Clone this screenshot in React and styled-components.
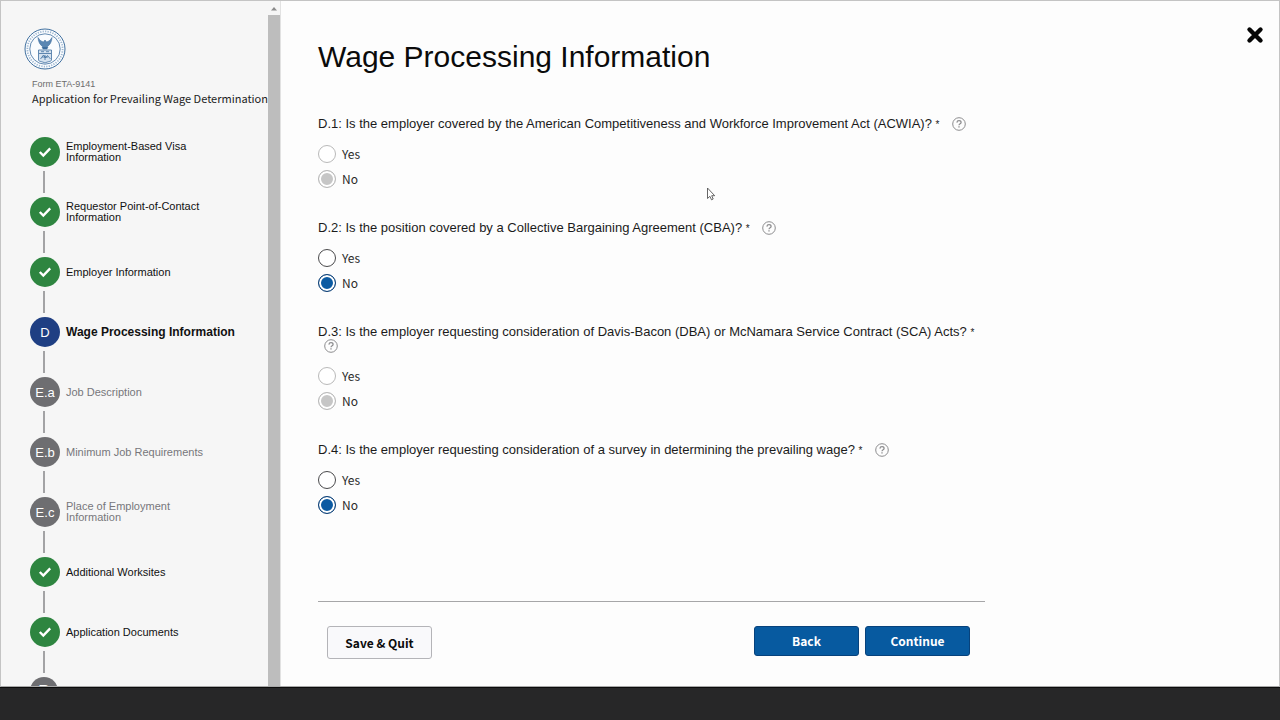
import React, { useId } from "react";
import styled, { createGlobalStyle, css } from "styled-components";

const sans = `"Liberation Sans", Arial, sans-serif`;
const humanist = `"Noto Sans CJK SC", "Source Sans Pro", sans-serif`;

const GlobalStyle = createGlobalStyle`
  *, *::before, *::after { box-sizing: border-box; }
  body { margin: 0; background: #272728; color: #111; font-family: ${sans}; }
`;

const Screen = styled.div`
  display: grid;
  grid-template-rows: minmax(0, 1fr) 33px;
  height: 100vh;
`;

const Workspace = styled.div`
  display: grid;
  grid-template-columns: 267px 13px minmax(0, 1fr);
  min-height: 0;
  background: #fdfdfd;
  border: 1px solid #c4c4c4;
  border-bottom-color: #a8a8a8;
`;

const BottomBar = styled.div`
  background: #272728;
  border-top: 1px solid #0c0c0c;
`;

const Sidebar = styled.aside`
  min-height: 0;
  overflow: hidden;
  background: #f6f6f6;
  padding: 27px 0 0 23px;
`;

const Seal = styled.svg`
  display: block;
  width: 42px;
  height: 42px;
`;

const FormHeading = styled.div`
  padding: 8px 0 0 8px;
  white-space: nowrap;
`;

const FormNumber = styled.p`
  margin: 0;
  font-size: 9px;
  line-height: 12px;
  color: #6c6c6c;
`;

const FormName = styled.p`
  margin: 0;
  font-family: ${humanist};
  font-size: 11px;
  line-height: 17px;
  color: #222;
`;

const Steps = styled.ol`
  list-style: none;
  margin: 0;
  padding: 30px 0 0 6px;
`;

const Step = styled.li`
  height: 60px;
`;

const StepLink = styled.a`
  display: flex;
  align-items: center;
  gap: 6px;
  height: 30px;
  font-size: ${(p) => (p.$state === "current" ? 12 : 11)}px;
  line-height: 11px;
  text-decoration: none;
  white-space: pre-line;
  color: ${(p) => (p.$state === "todo" ? "#77777b" : "#111")};
  font-weight: ${(p) => (p.$state === "current" ? 700 : 400)};
`;

const badgeColor = { done: "#2e8540", current: "#1f3f83", todo: "#6e6e71" };

const Badge = styled.span`
  flex: none;
  display: flex;
  align-items: center;
  justify-content: center;
  width: 30px;
  height: 30px;
  border-radius: 50%;
  background: ${(p) => badgeColor[p.$state]};
  color: #fff;
  font-size: 13px;
  font-weight: 400;

  ${(p) =>
    p.$final &&
    css`
      width: 28px;
      height: 28px;
      align-self: flex-start;
      font-size: 16px;
    `}
`;

const Connector = styled.div`
  width: 2px;
  height: 22px;
  margin: 4px 0 4px 13px;
  background: #a3a3a5;
`;

const ScrollTrack = styled.div`
  display: flex;
  flex-direction: column;
  background: #f6f6f6;
  border-right: 1px solid #e2e2e2;
`;

const ScrollArrow = styled.svg`
  display: block;
  width: 12px;
  height: 14px;
`;

const ScrollThumb = styled.div`
  flex: 1;
  background: #bdbdbd;
`;

const Main = styled.main`
  display: flex;
  align-items: flex-start;
  justify-content: space-between;
  min-height: 0;
  overflow: hidden;
  padding: 0 14px 0 37px;
`;

const Form = styled.form`
  flex: 0 1 667px;
  padding-top: 38px;
`;

const Title = styled.h1`
  margin: 0 0 42px;
  font-size: 30px;
  line-height: 36px;
  font-weight: 400;
  color: #0b0b0b;
`;

const Question = styled.fieldset`
  margin: 0 0 33px;
  padding: 0;
  border: 0;
  min-width: 0;
`;

const Prompt = styled.legend`
  padding: 0;
  margin-bottom: 14px;
  font-size: 13px;
  line-height: 14px;
  color: #1b1b1b;
`;

const Required = styled.span`
  font-size: 10px;
  line-height: 1px;
`;

const HelpButton = styled.button`
  width: 14px;
  height: 14px;
  margin: 0 6px;
  padding: 0;
  border: 0;
  background: none;
  vertical-align: top;
`;

const HelpIcon = styled.svg`
  display: block;
  width: 14px;
  height: 14px;
`;

const Options = styled.div`
  display: grid;
  gap: 7px;
  justify-items: start;
`;

const Option = styled.label`
  display: flex;
  align-items: center;
  gap: 6px;
  height: 18px;
  font-family: ${humanist};
  font-size: 12px;
  line-height: 18px;
  color: #2a2a2a;
`;

const Radio = styled.input`
  appearance: none;
  width: 18px;
  height: 18px;
  margin: 0;
  border: 1px solid #4a4a4c;
  border-radius: 50%;
  background: #fff;

  &:checked {
    border-color: #0f3f74;
    background: #0b5aa2;
    box-shadow: inset 0 0 0 2px #fff;
  }

  &:disabled {
    border-color: #b9b9b9;
  }

  &:disabled:checked {
    background: #c6c6c6;
  }
`;

const Footer = styled.footer`
  display: flex;
  align-items: flex-start;
  gap: 6px;
  margin-top: 87px;
  padding: 24px 15px 24px 9px;
  border-top: 1px solid #a6a6a8;
`;

const Button = styled.button`
  width: 105px;
  height: 30px;
  padding: 0;
  border: 1px solid #07427c;
  border-radius: 3px;
  background: #075aa0;
  color: #fff;
  font-family: ${humanist};
  font-size: 12px;
  line-height: 18px;
  font-weight: 700;

  ${(p) =>
    p.$secondary &&
    css`
      height: 33px;
      margin-right: auto;
      border-color: #b4b4b8;
      background: #f9f9fb;
      color: #0b0b0b;
    `}
`;

const CloseButton = styled.button`
  width: 20px;
  height: 20px;
  margin-top: 24px;
  padding: 0;
  border: 0;
  background: none;
`;

const CloseIcon = styled.svg`
  display: block;
  width: 20px;
  height: 20px;
`;

const Pointer = styled.svg`
  position: absolute;
  left: 706px;
  top: 187px;
  width: 10px;
  height: 14px;
  pointer-events: none;
`;

const steps = [
  { label: "Employment-Based Visa\nInformation", state: "done" },
  { label: "Requestor Point-of-Contact\nInformation", state: "done" },
  { label: "Employer Information", state: "done" },
  { label: "Wage Processing Information", state: "current", code: "D" },
  { label: "Job Description", state: "todo", code: "E.a" },
  { label: "Minimum Job Requirements", state: "todo", code: "E.b" },
  { label: "Place of Employment\nInformation", state: "todo", code: "E.c" },
  { label: "Additional Worksites", state: "done" },
  { label: "Application Documents", state: "done" },
  { label: "", state: "todo", code: "R" },
];

const questions = [
  { text: "D.1: Is the employer covered by the American Competitiveness and Workforce Improvement Act (ACWIA)?", disabled: true },
  { text: "D.2: Is the position covered by a Collective Bargaining Agreement (CBA)?" },
  { text: "D.3: Is the employer requesting consideration of Davis-Bacon (DBA) or McNamara Service Contract (SCA) Acts?", disabled: true },
  { text: "D.4: Is the employer requesting consideration of a survey in determining the prevailing wage?" },
];

function DepartmentSeal() {
  return (
    <Seal viewBox="0 0 42 42" fill="none" stroke="#3f6f9f" aria-label="Department seal" role="img">
      <circle cx="21" cy="21" r="20" fill="#fafcfe" strokeWidth="1" />
      <circle cx="21" cy="21" r="17.600" stroke="#9db6d0" strokeWidth="1.800" strokeDasharray="1.200 1.300" />
      <circle cx="21" cy="21" r="15.200" strokeWidth="0.800" />
      <path d="M14 9.500c.3 4.500 2 7.500 5 9.300h4c3-1.800 4.700-4.800 5-9.300-1.600 2.600-3.300 4-5.500 4.500L21 12l-1.500 2c-2.200-.5-3.900-1.900-5.500-4.500z" fill="#5b87b3" strokeWidth="0.600" />
      <path d="M18 19h6l-1 2h-4z" fill="#3f6f9f" strokeWidth="0.500" />
      <path d="M14.500 22h13v10c0 1.600-4 1.500-6.500 3-2.500-1.500-6.500-1.400-6.500-3z" fill="#d5e2ef" strokeWidth="0.800" />
      <path d="M15 25.500h12M17 23.700h3M22 23.700h3M16.500 31l3-4 2 3 2-2.500 3 3.500M18 29h6M21 27v5" strokeWidth="0.800" />
    </Seal>
  );
}

function StepItem({ label, state, code, last }) {
  return (
    <Step>
      <StepLink href="#" $state={state} aria-current={state === "current" ? "step" : undefined} aria-label={label || "Next section"}>
        <Badge $state={state} $final={last}>
          {state === "done" ? (
            <svg width="14" height="12" viewBox="0 0 14 12" fill="none" stroke="#fff" strokeWidth="2.400" aria-hidden="true">
              <path d="M1.800 6 5.300 9.500 12.200 2.300" />
            </svg>
          ) : (
            code
          )}
        </Badge>
        {label}
      </StepLink>
      {!last && <Connector />}
    </Step>
  );
}

function YesNoQuestion({ text, disabled }) {
  const name = useId();
  return (
    <Question disabled={disabled}>
      <Prompt>
        {text} <Required>*{"\u00a0"}</Required>{" "}
        <HelpButton type="button" aria-label="Help">
          <HelpIcon viewBox="0 0 14 14" fill="none" stroke="#8c8c8e">
            <circle cx="7" cy="7" r="6.300" strokeWidth="1" />
            <path d="M4.900 5.600C5 4.400 5.800 3.700 7 3.700s2.100.7 2.100 1.700C9.100 6.700 7 6.800 7 8.300" strokeWidth="1.200" />
            <path d="M7 9.300v1.300" strokeWidth="1.300" />
          </HelpIcon>
        </HelpButton>
      </Prompt>
      <Options>
        <Option>
          <Radio type="radio" name={name} value="yes" />
          Yes
        </Option>
        <Option>
          <Radio type="radio" name={name} value="no" defaultChecked />
          No
        </Option>
      </Options>
    </Question>
  );
}

export default function App() {
  return (
    <>
      <GlobalStyle />
      <Screen>
        <Workspace>
          <Sidebar>
            <DepartmentSeal />
            <FormHeading>
              <FormNumber>Form ETA-9141</FormNumber>
              <FormName>Application for Prevailing Wage Determination</FormName>
            </FormHeading>
            <Steps>
              {steps.map((step, i) => (
                <StepItem key={i} {...step} last={i === steps.length - 1} />
              ))}
            </Steps>
          </Sidebar>
          <ScrollTrack aria-hidden="true">
            <ScrollArrow viewBox="0 0 12 14">
              <path d="M3 9.500h6L6 6z" fill="#8b8b8b" />
            </ScrollArrow>
            <ScrollThumb />
          </ScrollTrack>
          <Main>
            <Form onSubmit={(e) => e.preventDefault()}>
              <Title>Wage Processing Information</Title>
              {questions.map((q) => (
                <YesNoQuestion key={q.text} {...q} />
              ))}
              <Footer>
                <Button type="button" $secondary>Save &amp; Quit</Button>
                <Button type="button">Back</Button>
                <Button type="submit">Continue</Button>
              </Footer>
            </Form>
            <CloseButton type="button" aria-label="Close">
              <CloseIcon viewBox="0 0 20 20" stroke="#050505" strokeWidth="4.400" strokeLinecap="round">
                <path d="M4.500 4.500l11 11M15.500 4.500l-11 11" />
              </CloseIcon>
            </CloseButton>
          </Main>
        </Workspace>
        <BottomBar />
      </Screen>
      <Pointer viewBox="0 0 10 14" aria-hidden="true">
        <path d="M1.500 1v10.500l2.400-2.200 1.600 3.500 1.700-.8-1.500-3.300h3z" fill="#fff" stroke="#555" strokeWidth="0.900" />
      </Pointer>
    </>
  );
}
